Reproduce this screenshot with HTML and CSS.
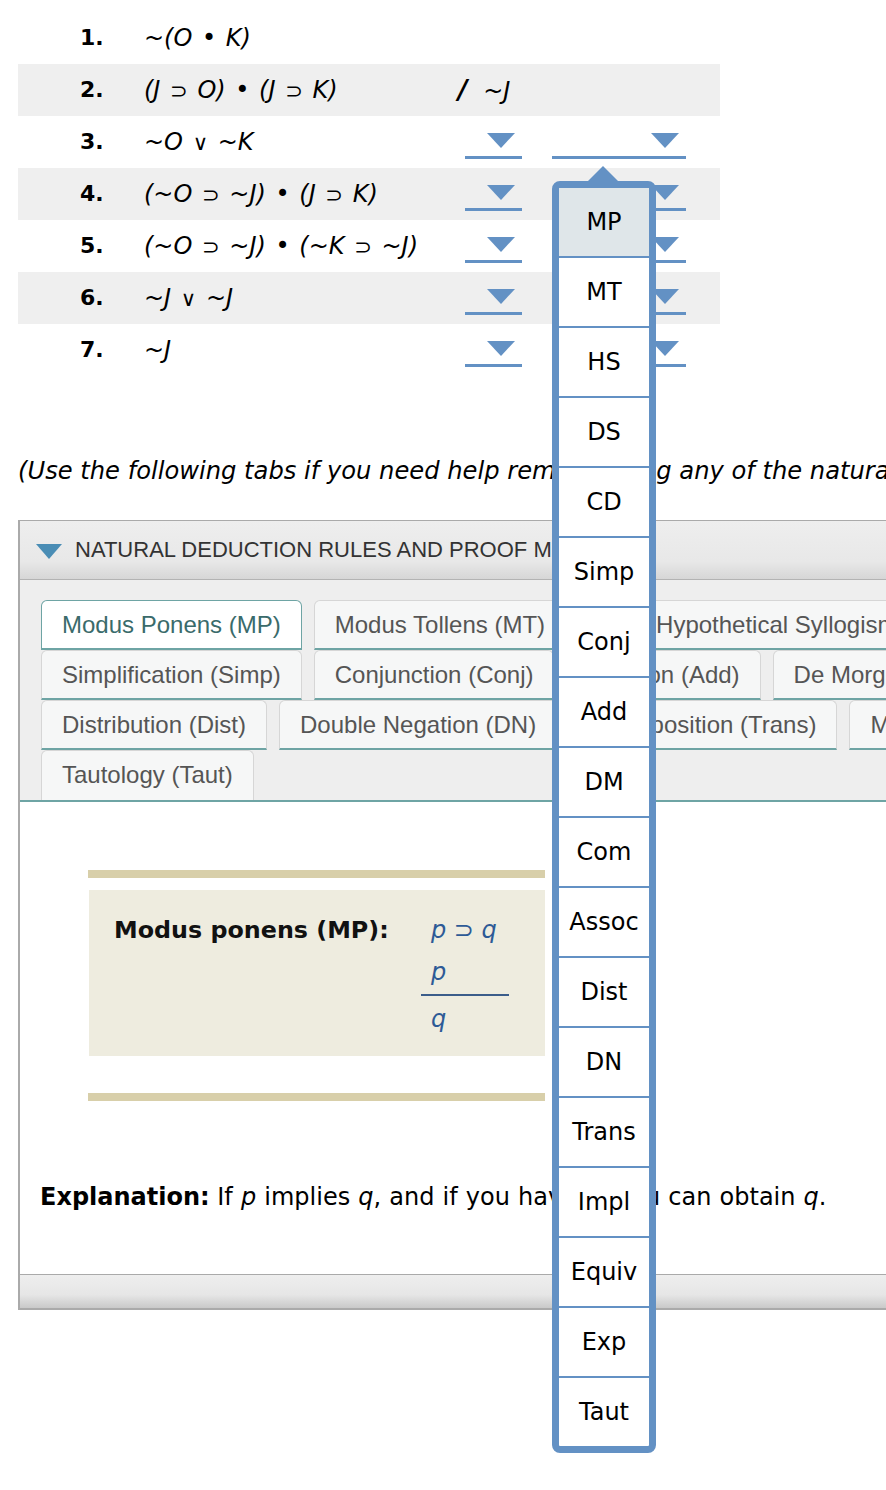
FILE: index.html
```html
<!DOCTYPE html>
<html lang="en">
<head>
<meta charset="utf-8">
<title>Proof</title>
<link rel="stylesheet" href="styles.css">
</head>
<body>
<div class="page">
  <div class="proof">
    <div class="line"><span class="num">1.</span><span class="wff">~(O • K)</span></div>
    <div class="line alt"><span class="num">2.</span><span class="wff">(J <span class="op">⊃</span> O) • (J <span class="op">⊃</span> K)</span><span class="concl"><b class="slash">/</b> ~J</span></div>
    <div class="line"><span class="num">3.</span><span class="wff">~O <span class="op">∨</span> ~K</span><span class="sel sel-line"></span><span class="sel sel-rule"></span></div>
    <div class="line alt"><span class="num">4.</span><span class="wff">(~O <span class="op">⊃</span> ~J) • (J <span class="op">⊃</span> K)</span><span class="sel sel-line"></span><span class="sel sel-rule"></span></div>
    <div class="line"><span class="num">5.</span><span class="wff">(~O <span class="op">⊃</span> ~J) • (~K <span class="op">⊃</span> ~J)</span><span class="sel sel-line"></span><span class="sel sel-rule"></span></div>
    <div class="line alt"><span class="num">6.</span><span class="wff">~J <span class="op">∨</span> ~J</span><span class="sel sel-line"></span><span class="sel sel-rule"></span></div>
    <div class="line"><span class="num">7.</span><span class="wff">~J</span><span class="sel sel-line"></span><span class="sel sel-rule"></span></div>
  </div>

  <p class="hint">(Use the following tabs if you need help remembering any of the natural deduction rules.)</p>

  <div class="panel">
    <div class="panel-head"><span class="head-tri"></span><span class="head-title">NATURAL DEDUCTION RULES AND PROOF METHODS</span></div>
    <div class="tabs">
      <div class="tab-row">
        <span class="tab active">Modus Ponens (MP)</span>
        <span class="tab">Modus Tollens (MT)</span>
        <span class="tab tab-shift">Hypothetical Syllogism (HS)</span>
      </div>
      <div class="tab-row">
        <span class="tab">Simplification (Simp)</span>
        <span class="tab">Conjunction (Conj)</span>
        <span class="tab">Addition (Add)</span>
        <span class="tab">De Morgan's Rule (DM)</span>
      </div>
      <div class="tab-row">
        <span class="tab">Distribution (Dist)</span>
        <span class="tab">Double Negation (DN)</span>
        <span class="tab">Transposition (Trans)</span>
        <span class="tab">Material Implication (Impl)</span>
      </div>
      <div class="tab-row">
        <span class="tab">Tautology (Taut)</span>
      </div>
    </div>
    <div class="tab-content">
      <div class="rule-wrap">
        <div class="rule-bar"></div>
        <div class="rule-box">
          <div class="rule-name">Modus ponens (MP):</div>
          <div class="rule-form">
            <div class="prem">p ⊃ q</div>
            <div class="prem last">p</div>
            <div class="result">q</div>
          </div>
        </div>
        <div class="rule-bar"></div>
      </div>
      <p class="explain"><b>Explanation:</b> <span class="explain-text">If <i>p</i> implies <i>q</i>, and if you have <i>p</i>, you can obtain <i>q</i>.</span></p>
    </div>
    <div class="panel-foot"></div>
  </div>

  <div class="menu">
    <div class="menu-item active">MP</div>
    <div class="menu-item">MT</div>
    <div class="menu-item">HS</div>
    <div class="menu-item">DS</div>
    <div class="menu-item">CD</div>
    <div class="menu-item">Simp</div>
    <div class="menu-item">Conj</div>
    <div class="menu-item">Add</div>
    <div class="menu-item">DM</div>
    <div class="menu-item">Com</div>
    <div class="menu-item">Assoc</div>
    <div class="menu-item">Dist</div>
    <div class="menu-item">DN</div>
    <div class="menu-item">Trans</div>
    <div class="menu-item">Impl</div>
    <div class="menu-item">Equiv</div>
    <div class="menu-item">Exp</div>
    <div class="menu-item">Taut</div>
  </div>
</div>
</body>
</html>
```
FILE: styles.css
```css
* { box-sizing: border-box; }
html, body { margin: 0; padding: 0; }
body {
  width: 886px;
  overflow: hidden;
  background: #fff;
  color: #000;
  font-family: "DejaVu Sans", Verdana, sans-serif;
}
.page {
  position: relative;
  width: 886px;
  height: 1490px;
  overflow: hidden;
}

/* proof lines */
.proof {
  padding-top: 12px;
  margin-left: 18px;
  width: 702px;
}
.line {
  display: flex;
  align-items: flex-start;
  height: 52px;
  padding-left: 62px;
}
.line.alt { background: #efefef; }
.num {
  flex: none;
  width: 64px;
  font-weight: bold;
  font-size: 22px;
  line-height: 52px;
}
.wff {
  flex: none;
  width: 314px;
  font-style: italic;
  font-size: 24px;
  line-height: 52px;
  word-spacing: 2px;
  white-space: nowrap;
}
.op { font-size: 0.88em; font-style: normal; }
.concl {
  font-style: italic;
  font-size: 24px;
  line-height: 52px;
  white-space: nowrap;
}
.slash { font-size: 26px; margin-right: 8px; }
.sel {
  flex: none;
  position: relative;
  height: 43px;
  border-bottom: 3px solid #6391c4;
}
.sel-line { width: 57px; margin-left: 7px; }
.sel-rule { width: 134px; margin-left: 30px; }
.sel::after {
  content: "";
  position: absolute;
  right: 7px;
  top: 17px;
  border-left: 14px solid transparent;
  border-right: 14px solid transparent;
  border-top: 15px solid #6391c4;
}

/* hint */
.hint {
  margin: 80px 0 0 18px;
  font-size: 24.2px;
  line-height: 30px;
  font-style: italic;
  white-space: nowrap;
}

/* panel */
.panel {
  margin: 34px 0 0 18px;
  width: 960px;
  border: 2px solid #aaaaaa;
  border-top-width: 1px;
}
.panel-head {
  height: 59px;
  display: flex;
  align-items: center;
  gap: 13px;
  padding-left: 16px;
  background: linear-gradient(#eeeeee, #e8e8e8 70%, #d6d6d6);
  border-bottom: 1px solid #b3b3b3;
  font-family: "Liberation Sans", Arial, sans-serif;
  font-size: 22px;
  color: #333;
  white-space: nowrap;
}
.head-tri {
  width: 0;
  height: 0;
  border-left: 13px solid transparent;
  border-right: 13px solid transparent;
  border-top: 15px solid #4a8db5;
  margin-top: 2px;
}
.tabs {
  background: #eeeeee;
  padding: 20px 0 0 21px;
  border-bottom: 2px solid #6ea4a4;
}
.tab-row {
  display: flex;
  gap: 12px;
  height: 50px;
}
.tab {
  flex: none;
  height: 50px;
  padding: 0 20px;
  border: 1px solid #d6d6d6;
  border-bottom: 2px solid #6ea4a4;
  border-radius: 6px 6px 0 0;
  background: #f6f7f7;
  font-family: "Liberation Sans", Arial, sans-serif;
  font-size: 24px;
  line-height: 47px;
  color: #555;
  white-space: nowrap;
}
.tab.active {
  background: #fff;
  border-color: #6ea4a4;
  color: #3a6b6b;
}
.tab-shift { margin-left: 57px; }
.tab-row:last-child .tab { border-bottom: 0; }

.tab-content {
  height: 472px;
  background: #fff;
  padding: 68px 0 0 20px;
}
.rule-wrap { margin-left: 48px; width: 457px; }
.rule-bar {
  height: 8px;
  background: #d8cfaa;
}
.rule-box {
  display: flex;
  height: 166px;
  margin: 12px 0 37px 1px;
  padding: 25px 0 0 25px;
  background: #eeecdf;
}
.rule-name {
  flex: none;
  width: 307px;
  font-weight: bold;
  font-size: 23.8px;
  line-height: 30px;
  color: #111;
}
.rule-form {
  width: 88px;
  margin-top: -6px;
  color: #2d5a96;
  font-style: italic;
  font-size: 24px;
}
.prem {
  padding-left: 10px;
  line-height: 42px;
}
.prem.last {
  line-height: 43px;
  border-bottom: 2px solid #3b5d8a;
}
.result {
  padding-left: 10px;
  line-height: 46px;
}
.explain {
  margin: 81px 0 0 0;
  font-size: 24px;
  line-height: 30px;
  white-space: nowrap;
}
.explain-text { word-spacing: 0.5px; font-size: 24px; }
.panel-foot {
  height: 34px;
  border-top: 1px solid #aaaaaa;
  background: linear-gradient(#eeeeee, #e6e6e6 60%, #c9c9c9);
}

/* dropdown menu */
.menu {
  position: absolute;
  left: 552px;
  top: 181px;
  width: 104px;
  border: 7px solid #6391c4;
  border-radius: 8px;
  background: #fff;
}
.menu::before {
  content: "";
  position: absolute;
  top: -22px;
  left: 50%;
  margin-left: -16px;
  border-left: 15px solid transparent;
  border-right: 15px solid transparent;
  border-bottom: 15px solid #6391c4;
}
.menu-item {
  box-sizing: content-box;
  height: 68px;
  line-height: 68px;
  text-align: center;
  font-size: 24px;
  color: #000;
}
.menu-item + .menu-item { border-top: 2px solid #6391c4; }
.menu-item.active { background: #dfe6e9; }
```
